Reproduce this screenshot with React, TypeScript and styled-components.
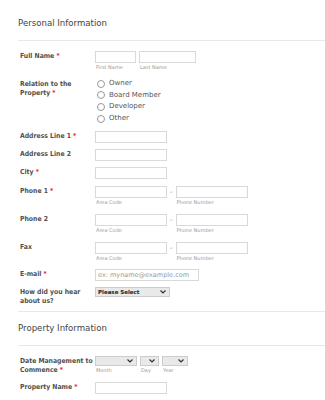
import React from 'react';
import styled, { createGlobalStyle } from 'styled-components';

const GlobalStyle = createGlobalStyle`
  body {
    margin: 0;
    background: #fff;
    font-family: "DejaVu Sans", Verdana, sans-serif;
    color: #555;
  }
`;

type PhoneProps = { label: string; required?: boolean };

const Req = () => <Star>*</Star>;

const PhoneRow: React.FC<PhoneProps> = ({ label, required }) => (
  <Row $pad={4}>
    <Label>
      {label} {required && <Req />}
    </Label>
    <Fields>
      <Sub>
        <Input $w={72} />
        <SubLabel>Area Code</SubLabel>
      </Sub>
      <Dash>-</Dash>
      <Sub>
        <Input $w={72} />
        <SubLabel>Phone Number</SubLabel>
      </Sub>
    </Fields>
  </Row>
);

const Chevron = () => (
  <svg width="6" height="4" viewBox="0 0 6 4">
    <path d="M0.5 0.5 L3 3 L5.5 0.5" fill="none" stroke="#333" strokeWidth="1.2" />
  </svg>
);

const App: React.FC = () => {
  return (
    <Page>
      <GlobalStyle />
      <SectionTitle>Personal Information</SectionTitle>
      <Divider $top={11} $bottom={7} />

      <Rows>
        <Row>
          <Label>
            Full Name <Req />
          </Label>
          <Fields>
            <Sub>
              <Input $w={41} />
              <SubLabel>First Name</SubLabel>
            </Sub>
            <Sub>
              <Input $w={57} />
              <SubLabel>Last Name</SubLabel>
            </Sub>
          </Fields>
        </Row>

        <Row $pad={5}>
          <Label>
            Relation to the Property <Req />
          </Label>
          <RadioList>
            {['Owner', 'Board Member', 'Developer', 'Other'].map((o) => (
              <RadioItem key={o}>
                <Radio />
                {o}
              </RadioItem>
            ))}
          </RadioList>
        </Row>

        <Row>
          <Label>
            Address Line 1 <Req />
          </Label>
          <Input $w={72} />
        </Row>
        <Row>
          <Label>Address Line 2</Label>
          <Input $w={72} />
        </Row>
        <Row>
          <Label>
            City <Req />
          </Label>
          <Input $w={72} />
        </Row>

        <PhoneRow label="Phone 1" required />
        <PhoneRow label="Phone 2" />
        <PhoneRow label="Fax" />

        <Row>
          <Label>
            E-mail <Req />
          </Label>
          <Input $w={104}>
            <Placeholder>ex: myname@example.com</Placeholder>
          </Input>
        </Row>
        <Row>
          <Label>How did you hear about us?</Label>
          <Select $w={75}>
            <SelectText>Please Select</SelectText>
            <Chevron />
          </Select>
        </Row>
      </Rows>

      <Divider $top={1} $bottom={10} />
      <SectionTitle>Property Information</SectionTitle>
      <Divider $top={11} $bottom={7} />

      <Rows>
        <Row>
          <Label>
            Date Management to Commence <Req />
          </Label>
          <Fields>
            <Sub>
              <Select $w={42}>
                <span />
                <Chevron />
              </Select>
              <SubLabel>Month</SubLabel>
            </Sub>
            <Sub>
              <Select $w={19}>
                <span />
                <Chevron />
              </Select>
              <SubLabel>Day</SubLabel>
            </Sub>
            <Sub>
              <Select $w={26}>
                <span />
                <Chevron />
              </Select>
              <SubLabel>Year</SubLabel>
            </Sub>
          </Fields>
        </Row>
        <Row>
          <Label>
            Property Name <Req />
          </Label>
          <Input $w={72} />
        </Row>
        <Row>
          <Label />
          <Input $w={72} />
        </Row>
      </Rows>
    </Page>
  );
};

export default App;

const Page = styled.div`
  padding: 17px 0 0 18px;
  overflow: hidden;
  height: 400px;
  box-sizing: border-box;
`;

const SectionTitle = styled.h2`
  margin: 0;
  font-size: 8.6px;
  font-weight: normal;
  color: #444;
  line-height: 12px;
  padding: 0;
`;

const Divider = styled.hr<{ $top: number; $bottom: number }>`
  border: 0;
  border-top: 1px solid #e8e8e8;
  margin: ${(p) => p.$top}px 0 ${(p) => p.$bottom}px;
`;

const Rows = styled.div`
  display: flex;
  flex-direction: column;
`;

const Row = styled.div<{ $pad?: number }>`
  display: flex;
  align-items: flex-start;
  padding: ${(p) => p.$pad ?? 3}px 0;
`;

const Label = styled.div`
  width: 79px;
  margin-right: -2px;
  flex-shrink: 0;
  box-sizing: border-box;
  padding: 1px 0 0 2px;
  font-family: "DejaVu Sans Condensed", "DejaVu Sans", sans-serif;
  font-size: 6.8px;
  font-weight: bold;
  line-height: 9.4px;
  color: #505050;
`;

const Star = styled.span`
  color: #e23;
`;

const Fields = styled.div`
  display: flex;
  align-items: flex-start;
  gap: 3px;
`;

const Sub = styled.div`
  display: flex;
  flex-direction: column;
`;

const SubLabel = styled.span`
  font-size: 5px;
  color: #999;
  line-height: 8px;
  padding-left: 1px;
`;

const Input = styled.div<{ $w: number }>`
  width: ${(p) => p.$w}px;
  height: 12px;
  box-sizing: border-box;
  border: 1px solid #d9d9d9;
  background: #fff;
  display: flex;
  align-items: center;
  padding-left: 2px;
`;

const Placeholder = styled.span`
  font-size: 6.5px;
  color: #999;
`;

const Dash = styled.span`
  font-size: 7px;
  color: #999;
  line-height: 12px;
`;

const Select = styled.div<{ $w: number }>`
  width: ${(p) => p.$w}px;
  height: 10px;
  box-sizing: border-box;
  border: 1px solid #ccc;
  background: #e9e9e9;
  display: flex;
  align-items: center;
  justify-content: space-between;
  padding: 0 3px 0 2px;
`;

const SelectText = styled.span`
  font-size: 5.5px;
  font-weight: bold;
  color: #222;
`;

const RadioList = styled.div`
  display: flex;
  flex-direction: column;
  gap: 2.7px;
`;

const RadioItem = styled.label`
  display: flex;
  align-items: center;
  gap: 4px;
  font-size: 7px;
  line-height: 9px;
  color: #555;
  padding-left: 2px;
`;

const Radio = styled.span`
  width: 6px;
  height: 6px;
  border: 1px solid #999;
  border-radius: 50%;
  display: inline-block;
`;
